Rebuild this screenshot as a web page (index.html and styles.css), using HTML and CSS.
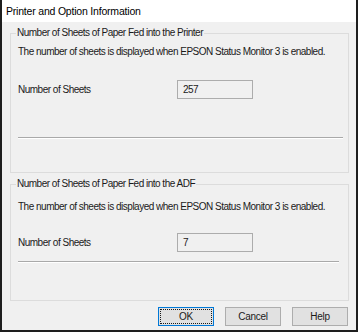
FILE: index.html
```html
<!DOCTYPE html>
<html lang="en">
<head>
    <meta charset="UTF-8">
    <title>Printer and Option Information</title>
    <link rel="stylesheet" href="styles.css">
</head>
<body>
    <div class="window">
        <div class="titlebar">Printer and Option Information</div>
        <div class="content">
            <fieldset class="group group-printer">
                <legend>Number of Sheets of Paper Fed into the Printer</legend>
                <p class="note">The number of sheets is displayed when EPSON Status Monitor 3 is enabled.</p>
                <div class="field">
                    <span class="label">Number of Sheets</span>
                    <div class="box">257</div>
                </div>
                <div class="rule"></div>
            </fieldset>

            <fieldset class="group group-adf">
                <legend>Number of Sheets of Paper Fed into the ADF</legend>
                <p class="note">The number of sheets is displayed when EPSON Status Monitor 3 is enabled.</p>
                <div class="field">
                    <span class="label">Number of Sheets</span>
                    <div class="box">7</div>
                </div>
                <div class="rule rule-short"></div>
            </fieldset>

            <div class="buttons">
                <button class="btn btn-default"><span>OK</span></button>
                <button class="btn"><span>Cancel</span></button>
                <button class="btn"><span>Help</span></button>
            </div>
        </div>
    </div>
</body>
</html>
```

FILE: styles.css
```css
body {
    margin: 0;
    font-family: 'Liberation Sans', Arial, sans-serif;
    font-size: 10px;
    letter-spacing: -0.5px;
    color: #1a1a1a;
    background: #f0f0f0;
}

.window {
    width: 358px;
    height: 332px;
    box-sizing: border-box;
    border: 2px solid #1e1e1e;
    border-top: none;
    background: #f0f0f0;
    display: flex;
    flex-direction: column;
}

.titlebar {
    height: 22px;
    line-height: 22px;
    background: #ffffff;
    padding-left: 4px;
    font-size: 10.5px;
    letter-spacing: -0.2px;
    color: #000;
}

.content {
    padding: 5px 7px 0 8px;
}

/* Group boxes */
.group {
    margin: 0;
    padding: 0 0 0 7px;
    border: 1px solid #dcdcdc;
    min-width: 0;
}

.group legend {
    margin-left: -2px;
    padding: 0 1px;
    line-height: 12px;
    white-space: nowrap;
}

.group-printer {
    height: 144px;
}

.group-adf {
    margin-top: 5px;
    height: 121px;
}

.note {
    margin: 7px 0 0 0;
    line-height: 12px;
    white-space: nowrap;
}

.field {
    display: flex;
    align-items: center;
    margin-top: 22px;
}

.group-adf .note {
    margin-top: 11px;
}

.group-adf .field {
    margin-top: 20px;
}

.label {
    width: 159px;
}

.box {
    width: 69px;
    height: 17px;
    line-height: 17px;
    border: 1px solid #acacac;
    padding-left: 5px;
}

.rule {
    margin-top: 38px;
    width: 325px;
    height: 1px;
    background: #a9a9a9;
    border-bottom: 1px solid #ffffff;
}

.group-adf .rule {
    margin-top: 9px;
}

.rule-short {
    width: 321px;
}

/* Dialog buttons */
.buttons {
    display: flex;
    justify-content: flex-end;
    gap: 11px;
    margin-top: 6px;
    padding-right: 1px;
}

.btn {
    width: 56px;
    height: 19px;
    padding: 0;
    margin: 0;
    font-family: inherit;
    font-size: 10px;
    letter-spacing: -0.3px;
    color: #1a1a1a;
    background: #e1e1e1;
    border: 1px solid #adadad;
}

.btn-default {
    border-color: #0078d7;
    padding: 1px;
}

.btn-default span {
    display: block;
    height: 100%;
    line-height: 13px;
    box-sizing: border-box;
    border: 1px dotted #1a1a1a;
}
```
